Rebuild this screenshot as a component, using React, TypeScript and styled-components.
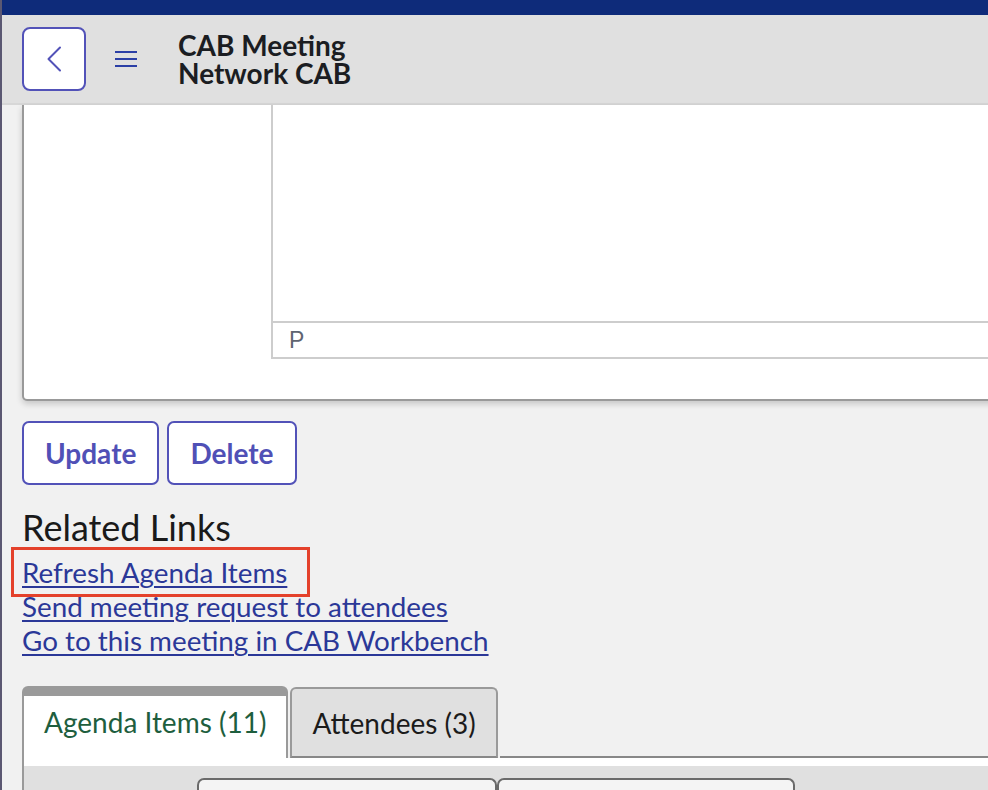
import React from "react";
import styled, { createGlobalStyle } from "styled-components";

const GlobalStyle = createGlobalStyle`
  html, body { margin: 0; padding: 0; }
  body {
    background: #f1f1f1;
    font-family: Lato, "Open Sans", Arial, sans-serif;
    overflow: hidden;
  }
  *, *::before, *::after { box-sizing: border-box; }
`;

const Frame = styled.div`
  width: 988px;
  height: 790px;
  overflow: hidden;
  border-left: 2px solid #5b5872;
  background: #f1f1f1;
  display: flex;
  flex-direction: column;
`;

const TopBar = styled.div`
  height: 15px;
  flex: none;
  background: #0e2b7a;
`;

const Header = styled.header`
  flex: none;
  height: 90px;
  background: #e0e0e0;
  border-bottom: 2px solid #d7d7d7;
  display: flex;
  align-items: center;
  padding-left: 20px;
`;

const BackButton = styled.button`
  width: 64px;
  height: 64px;
  border: 2px solid #5252b8;
  border-radius: 8px;
  background: #fff;
  display: flex;
  align-items: center;
  justify-content: center;
  padding: 0;
  margin-right: 29px;
`;

const MenuButton = styled.button`
  width: 22px;
  height: 16px;
  border: none;
  background: transparent;
  padding: 0;
  display: flex;
  flex-direction: column;
  justify-content: space-between;
  margin-right: 41px;
`;

const MenuLine = styled.span`
  display: block;
  height: 2px;
  width: 22px;
  background: #2b3fa6;
`;

const Title = styled.h1`
  margin: 0;
  font-size: 28px;
  font-weight: 700;
  color: #1b1d22;
  display: flex;
  flex-direction: column;
`;

const TitleLine = styled.span`
  display: block;
  height: 28px;
  line-height: 28px;
  white-space: nowrap;
`;

const Main = styled.main`
  flex: 1;
  padding-left: 20px;
  display: flex;
  flex-direction: column;
`;

const Card = styled.section`
  margin-right: -40px;
  background: #fff;
  border: 2px solid #999;
  border-top: none;
  border-radius: 0 0 5px 5px;
  box-shadow: 0 3px 6px rgba(0, 0, 0, 0.18);
  display: flex;
  padding-bottom: 40px;
`;

const CardLeft = styled.div`
  width: 247px;
  flex: none;
`;

const Editor = styled.div`
  flex: 1;
  border-left: 2px solid #cdcdcd;
  border-bottom: 2px solid #cdcdcd;
  display: flex;
  flex-direction: column;
`;

const EditorBody = styled.div`
  height: 216px;
`;

const StatusBar = styled.div`
  height: 36px;
  border-top: 2px solid #cdcdcd;
  padding-left: 16px;
  display: flex;
  align-items: center;
  font-family: "Liberation Sans", Arial, sans-serif;
  font-size: 23px;
  color: #5f6571;
`;

const ButtonRow = styled.div`
  display: flex;
  gap: 8px;
  margin-top: 20px;
`;

const ActionButton = styled.button`
  height: 64px;
  padding: 0 21px;
  background: #fff;
  border: 2px solid #5252b8;
  border-radius: 7px;
  font-family: Lato, sans-serif;
  font-weight: 700;
  font-size: 28px;
  color: #5050b6;
`;

const Heading = styled.h2`
  margin: 24px 0 0;
  font-size: 36px;
  line-height: 36px;
  font-weight: 400;
  color: #1a1a1a;
`;

const LinkList = styled.ul`
  list-style: none;
  margin: 11px 0 0;
  padding: 0;
`;

const LinkItem = styled.li<{ $highlight?: boolean }>`
  position: relative;
  display: block;
  line-height: 34px;
  height: 34px;
  ${(p) =>
    p.$highlight
      ? `&::after {
      content: "";
      position: absolute;
      left: -11px;
      top: -9px;
      width: 299px;
      height: 50px;
      border: 3px solid #e4412b;
      pointer-events: none;
    }`
      : ""}
`;

const RelatedLink = styled.a`
  font-size: 27.8px;
  color: #2b3898;
  text-decoration: underline;
  text-underline-offset: 3px;
  text-decoration-thickness: 2px;
  cursor: pointer;
`;

const TabList = styled.div`
  display: flex;
  align-items: flex-end;
  gap: 2px;
  margin-top: 28px;
  margin-right: -40px;
`;

const Tab = styled.div<{ $active?: boolean }>`
  height: ${(p) => (p.$active ? "72px" : "71px")};
  padding: 0 20px ${(p) => (p.$active ? "11px" : "0")};
  display: flex;
  align-items: center;
  font-size: 28px;
  white-space: nowrap;
  color: ${(p) => (p.$active ? "#1e5e3e" : "#1b1b1b")};
  background: ${(p) => (p.$active ? "#fff" : "#e0e0e0")};
  border: 2px solid #9a9a9a;
  border-top-width: ${(p) => (p.$active ? "10px" : "2px")};
  border-bottom: ${(p) => (p.$active ? "none" : "2px solid #888")};
  border-radius: 6px 6px 0 0;
`;

const TabFiller = styled.div`
  flex: 1;
  border-bottom: 2px solid #888;
`;

const TabPanel = styled.div`
  flex: 1;
  margin-right: -40px;
  border-left: 2px solid #9a9a9a;
  background: #fff;
  padding-top: 8px;
  display: flex;
  flex-direction: column;
`;

const PanelBody = styled.div`
  flex: 1;
  background: #e0e0e0;
  padding: 12px 0 0 173px;
  display: flex;
`;

const Column = styled.div<{ $w: number }>`
  width: ${(p) => p.$w}px;
  background: #f4f4f4;
  border: 2px solid #6a6a6a;
  border-bottom: none;
  border-radius: 7px 7px 0 0;
`;

export default function App() {
  return (
    <>
      <GlobalStyle />
      <Frame>
        <TopBar />
        <Header>
          <BackButton aria-label="Back">
            <svg width="16" height="26" viewBox="0 0 16 26" fill="none">
              <path d="M14 1.5 L2.5 13 L14 24.5" stroke="#5252b8" strokeWidth="2" strokeLinecap="round" strokeLinejoin="round" />
            </svg>
          </BackButton>
          <MenuButton aria-label="Menu">
            <MenuLine />
            <MenuLine />
            <MenuLine />
          </MenuButton>
          <Title>
            <TitleLine>CAB Meeting</TitleLine>
            <TitleLine>Network CAB</TitleLine>
          </Title>
        </Header>
        <Main>
          <Card>
            <CardLeft />
            <Editor>
              <EditorBody />
              <StatusBar>P</StatusBar>
            </Editor>
          </Card>
          <ButtonRow>
            <ActionButton>Update</ActionButton>
            <ActionButton>Delete</ActionButton>
          </ButtonRow>
          <Heading>Related Links</Heading>
          <LinkList>
            <LinkItem $highlight>
              <RelatedLink>Refresh Agenda Items</RelatedLink>
            </LinkItem>
            <LinkItem>
              <RelatedLink>Send meeting request to attendees</RelatedLink>
            </LinkItem>
            <LinkItem>
              <RelatedLink>Go to this meeting in CAB Workbench</RelatedLink>
            </LinkItem>
          </LinkList>
          <TabList>
            <Tab $active>Agenda Items (11)</Tab>
            <Tab>Attendees (3)</Tab>
            <TabFiller />
          </TabList>
          <TabPanel>
            <PanelBody>
              <Column $w={300} />
              <Column $w={298} />
            </PanelBody>
          </TabPanel>
        </Main>
      </Frame>
    </>
  );
}
